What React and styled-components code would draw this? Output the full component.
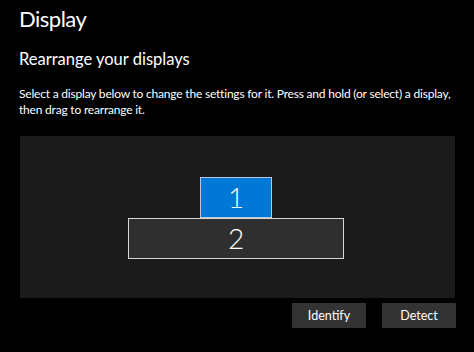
import React from 'react';
import styled, { createGlobalStyle } from 'styled-components';

const GlobalStyle = createGlobalStyle`
  html, body {
    margin: 0;
    padding: 0;
    background: #000;
  }
  body {
    font-family: Lato, 'Open Sans', sans-serif;
    color: #fff;
  }
`;

const Page = styled.div`
  width: 474px;
  height: 352px;
  box-sizing: border-box;
  padding: 3px 17px 0 19px;
  background: #000;
  overflow: hidden;
`;

const Title = styled.h1`
  margin: 0;
  font-size: 22px;
  font-weight: 400;
  line-height: 32px;
  letter-spacing: -0.5px;
`;

const Subtitle = styled.h2`
  margin: 13px 0 0;
  font-size: 16.5px;
  font-weight: 400;
  line-height: 22px;
`;

const Description = styled.p`
  margin: 16px 0 0;
  font-size: 12px;
  line-height: 16px;
  letter-spacing: -0.2px;
`;

const Arrangement = styled.div`
  box-sizing: border-box;
  margin: 18px 0 0 1px;
  width: 435px;
  height: 162px;
  padding: 1px 3px 0 0;
  background: #1b1b1b;
  display: flex;
  flex-direction: column;
  align-items: center;
  justify-content: center;
`;

const Monitor = styled.div`
  box-sizing: border-box;
  width: ${(p) => p.$width}px;
  height: ${(p) => p.$height}px;
  background: ${(p) => (p.$selected ? '#0078d7' : '#2f2f2f')};
  border: 1px solid ${(p) => (p.$selected ? '#b8c8d8' : '#d8d8d8')};
  display: flex;
  align-items: center;
  justify-content: center;
  font-size: 28px;
  font-weight: 300;
  color: #fff;
`;

const Actions = styled.div`
  display: flex;
  justify-content: flex-end;
  gap: 16px;
  margin-top: 5px;
  width: 437px;
`;

const Button = styled.button`
  width: 74px;
  height: 25px;
  border: none;
  background: #333;
  color: #fff;
  font-family: inherit;
  font-size: 12.5px;
  padding: 0;
`;

export default function App() {
  return (
    <>
      <GlobalStyle />
      <Page>
        <Title>Display</Title>
        <Subtitle>Rearrange your displays</Subtitle>
        <Description>
          Select a display below to change the settings for it. Press and hold
          (or select) a display, then drag to rearrange it.
        </Description>
        <Arrangement>
          <Monitor $width={72} $height={41} $selected>
            1
          </Monitor>
          <Monitor $width={216} $height={41}>
            2
          </Monitor>
        </Arrangement>
        <Actions>
          <Button>Identify</Button>
          <Button>Detect</Button>
        </Actions>
      </Page>
    </>
  );
}
